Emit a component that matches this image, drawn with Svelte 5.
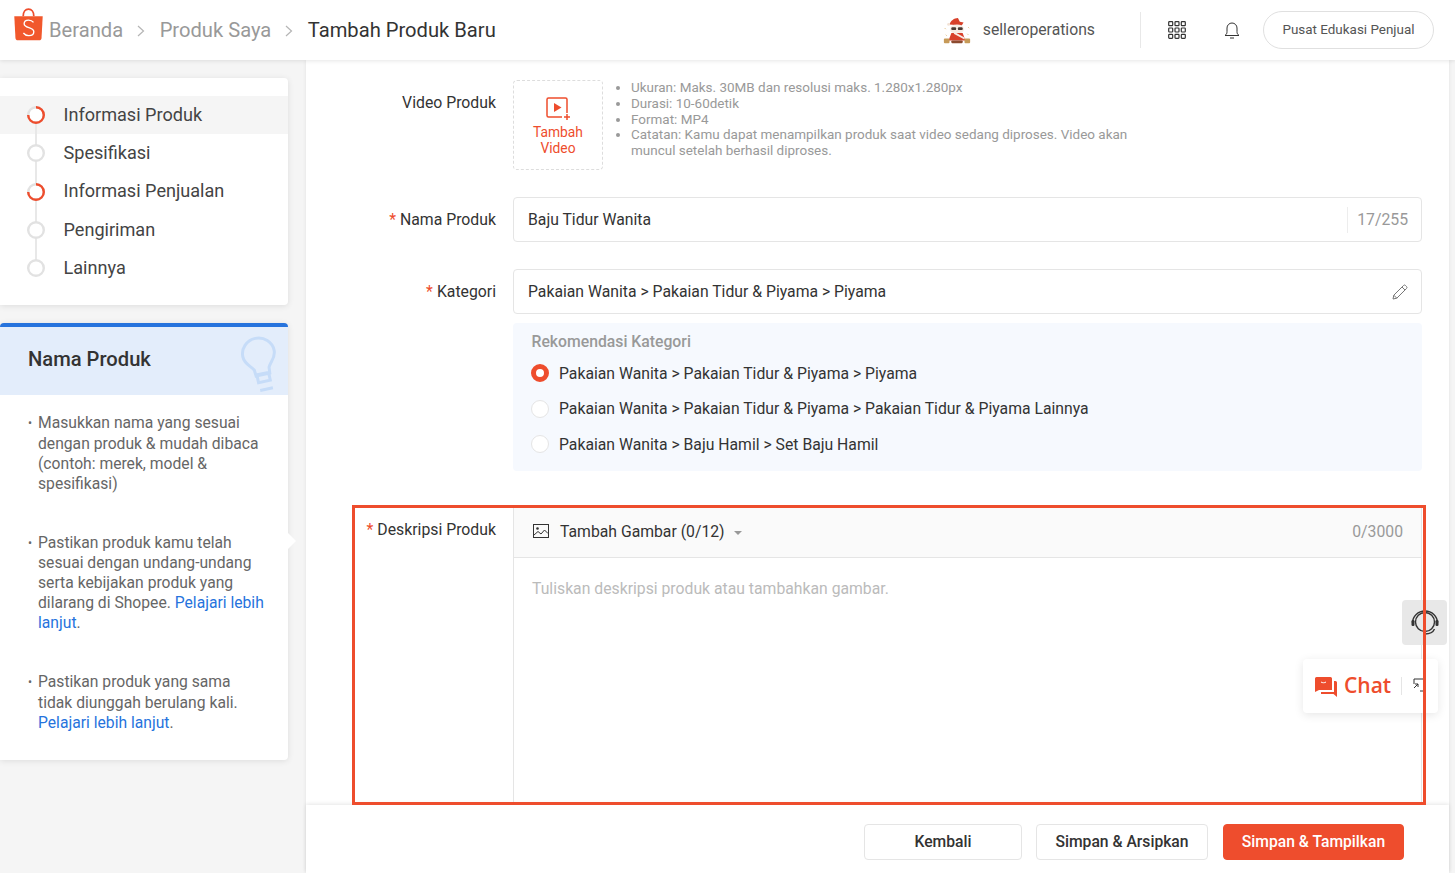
<script>
  const crumbs = ["Beranda", "Produk Saya"];
  const steps = [
    { label: "Informasi Produk", state: "partial", active: true },
    { label: "Spesifikasi", state: "empty" },
    { label: "Informasi Penjualan", state: "partial" },
    { label: "Pengiriman", state: "empty" },
    { label: "Lainnya", state: "empty" }
  ];
  const videoNotes = [
    "Ukuran: Maks. 30MB dan resolusi maks. 1.280x1.280px",
    "Durasi: 10-60detik",
    "Format: MP4",
    "Catatan: Kamu dapat menampilkan produk saat video sedang diproses. Video akan muncul setelah berhasil diproses."
  ];
  const categories = [
    "Pakaian Wanita > Pakaian Tidur & Piyama > Piyama",
    "Pakaian Wanita > Pakaian Tidur & Piyama > Pakaian Tidur & Piyama Lainnya",
    "Pakaian Wanita > Baju Hamil > Set Baju Hamil"
  ];
  let selected = $state(0);
</script>

<div class="page">
  <header class="topbar">
    <svg class="logo" viewBox="0 0 30 34" width="29" height="33">
      <path d="M9.500 8.500C9.500 4 11.800 1.200 15 1.200s5.500 2.800 5.500 7.300" fill="none" stroke="#ee4d2d" stroke-width="1.800"/>
      <path d="M.3 8.500h29.400l-1.200 22.400c-.1 1.500-1.100 2.500-2.500 2.500H4c-1.400 0-2.400-1-2.500-2.500z" fill="#f1582c"/>
      <path d="M20.200 14.800c-1.100-1.400-3-2.400-5.100-2.400-2.600 0-4.600 1.500-4.600 3.700 0 5.100 10 3 10 8.400 0 2.500-2.300 4-5.200 4-2.300 0-4.300-1-5.600-2.700" fill="none" stroke="#fff" stroke-width="1.400"/>
    </svg>
    <nav class="crumbs">
      {#each crumbs as crumb}
        <span class="crumb">{crumb}</span>
        <svg class="chev" viewBox="0 0 8 12" width="8" height="12"><path d="M1 1l5.500 5L1 11" fill="none" stroke="#b5b5b5" stroke-width="1.200"/></svg>
      {/each}
      <span class="crumb current">Tambah Produk Baru</span>
    </nav>
    <div class="account">
      <svg class="avatar" viewBox="0 0 32 32" width="30" height="30">
        <path d="M8 9c1-4 5-7 9-7l2 4 4 1-2 3z" fill="#d8402a"/>
        <circle cx="7" cy="9" r="1.500" fill="#f3e3d6"/>
        <ellipse cx="16" cy="14" rx="7.500" ry="5" fill="#f6ece4"/>
        <rect x="10" y="12" width="5" height="3" rx="1" fill="#4a3a34"/>
        <rect x="17" y="12" width="5" height="3" rx="1" fill="#4a3a34"/>
        <path d="M10 18h12l3 8H7z" fill="#d8402a"/>
        <path d="M13 18l11 6" stroke="#f6ece4" stroke-width="2"/>
        <rect x="2" y="24" width="6" height="5" rx="1" fill="#c69a58"/>
        <rect x="24" y="24" width="6" height="5" rx="1" fill="#c69a58"/>
        <rect x="10" y="26" width="12" height="3" rx="1" fill="#8c4a2f"/>
        <path d="M3 13l1 1M28 12l1 1M27 19l1 1M4 20l1 1" stroke="#e0b878" stroke-width="1"/>
      </svg>
      <span class="username">selleroperations</span>
    </div>
    <span class="divider"></span>
    <svg class="apps" viewBox="0 0 18 18" width="18" height="18">
      {#each [.7, 7, 13.300] as y}
        {#each [.7, 7, 13.300] as x}
          <rect {x} {y} width="4" height="4" rx=".7" fill="none" stroke="#333" stroke-width="1.200"/>
        {/each}
      {/each}
    </svg>
    <svg class="bell" viewBox="0 0 16 18" width="16" height="18">
      <path d="M1 14.500c1.500-1.200 2-2 2-4V7a5 5 0 0 1 10 0v3.500c0 2 .5 2.800 2 4z" fill="none" stroke="#333" stroke-width="1"/>
      <path d="M6 17h4" stroke="#333" stroke-width="1"/>
    </svg>
    <button class="edu">Pusat Edukasi Penjual</button>
  </header>

  <div class="body">
    <aside class="side">
      <section class="card steps">
        {#each steps as step}
          <div class="step" class:active={step.active}>
            {#if step.state === "partial"}
              <svg class="dot" viewBox="0 0 20 20" width="20" height="20">
                <circle cx="10" cy="10" r="7.800" fill="#fff" stroke="#e2e2e2" stroke-width="2.400"/>
                <path d="M10 2.200a7.800 7.800 0 1 1-7.800 7.800" fill="none" stroke="#ee4d2d" stroke-width="2.400"/>
              </svg>
            {:else}
              <svg class="dot" viewBox="0 0 20 20" width="20" height="20">
                <circle cx="10" cy="10" r="7.800" fill="#fff" stroke="#e2e2e2" stroke-width="2.400"/>
              </svg>
            {/if}
            <span>{step.label}</span>
          </div>
        {/each}
      </section>

      <section class="card tips">
        <div class="tips-head">
          <h2>Nama Produk</h2>
          <svg class="bulb" viewBox="0 0 38 60" width="38" height="60">
            <g transform="rotate(-12 19 20)">
              <path d="M12 39l-.5-6C9 28 3 25 3 17.500a16 15.500 0 0 1 32 0c0 7.500-6 10.500-8.500 15.500l-.5 6zM12 38h14M13 39v7h12v-7M13 54h13" fill="none" stroke="#c6dcf8" stroke-width="3"/>
            </g>
          </svg>
        </div>
        <div class="tips-body">
          <p>Masukkan nama yang sesuai dengan produk &amp; mudah dibaca (contoh: merek, model &amp; spesifikasi)</p>
          <p>Pastikan produk kamu telah sesuai dengan undang-undang serta kebijakan produk yang dilarang di Shopee. <a href="#top">Pelajari lebih lanjut</a>.</p>
          <p>Pastikan produk yang sama tidak diunggah berulang kali. <a href="#top">Pelajari lebih lanjut</a>.</p>
        </div>
      </section>
    </aside>

    <main class="main">
      <div class="form">
        <div class="row video-row">
          <div class="label plain">Video Produk</div>
          <div class="video-field">
            <div class="video-box">
              <svg viewBox="0 0 26 26" width="26" height="26">
                <path d="M17 21H3.500A1.500 1.500 0 0 1 2 19.500v-16A1.500 1.500 0 0 1 3.500 2h17A1.500 1.500 0 0 1 22 3.500V17" fill="none" stroke="#ee4d2d" stroke-width="1.500"/>
                <path d="M9 7l7.500 4.500L9 16z" fill="#ee4d2d"/>
                <path d="M22 18v6M19 21h6" stroke="#ee4d2d" stroke-width="1.500"/>
              </svg>
              <span>Tambah Video</span>
            </div>
            <ul class="notes">
              {#each videoNotes as note}
                <li>{note}</li>
              {/each}
            </ul>
          </div>
        </div>

        <div class="row name-row">
          <div class="label"><i>*</i>Nama Produk</div>
          <div class="input">
            <span class="value">Baju Tidur Wanita</span>
            <span class="count">17/255</span>
          </div>
        </div>

        <div class="row cat-row">
          <div class="label"><i>*</i>Kategori</div>
          <div class="cat-field">
            <div class="input">
              <span class="value">Pakaian Wanita &gt; Pakaian Tidur &amp; Piyama &gt; Piyama</span>
              <svg class="pencil" viewBox="0 0 16 16" width="16" height="16">
                <path d="M1 15l.8-3.800L11.500 1.500a1.400 1.400 0 0 1 2 0l1 1a1.400 1.400 0 0 1 0 2L4.800 14.200zM1.800 11.200l3 3M10 3l3 3" fill="none" stroke="#777" stroke-width="1"/>
              </svg>
            </div>
            <div class="recs">
              <div class="recs-title">Rekomendasi Kategori</div>
              {#each categories as cat, i}
                <label class="radio">
                  <input type="radio" name="cat" value={i} bind:group={selected} />
                  <span class="mark"></span>
                  <span>{cat}</span>
                </label>
              {/each}
            </div>
          </div>
        </div>

        <div class="row desc-row">
          <div class="label"><i>*</i>Deskripsi Produk</div>
          <div class="editor">
            <div class="toolbar">
              <svg viewBox="0 0 16 14" width="16" height="14">
                <rect x=".5" y=".5" width="15" height="13" fill="none" stroke="#333" stroke-width="1"/>
                <circle cx="4.500" cy="4.500" r="1.300" fill="#333"/>
                <path d="M1 11l4-3.500 3 2.500 3.500-4L15 9.500" fill="none" stroke="#333" stroke-width="1"/>
              </svg>
              <span class="add-img">Tambah Gambar (0/12)</span>
              <span class="caret"></span>
              <span class="desc-count">0/3000</span>
            </div>
            <div class="placeholder">Tuliskan deskripsi produk atau tambahkan gambar.</div>
          </div>
        </div>
      </div>

      <footer class="actions">
        <button class="btn back">Kembali</button>
        <button class="btn archive">Simpan &amp; Arsipkan</button>
        <button class="btn primary">Simpan &amp; Tampilkan</button>
      </footer>
    </main>
  </div>

  <div class="highlight"></div>

  <div class="support">
    <svg viewBox="0 0 30 30" width="30" height="30">
      <circle cx="15" cy="14" r="9.500" fill="none" stroke="#333" stroke-width="1.400"/>
      <path d="M2.500 15a12.500 12 0 0 1 25 0M15 26c5 0 8-1.500 9.500-5" fill="none" stroke="#333" stroke-width="1.400"/>
      <rect x="1.500" y="12" width="3" height="6" rx="1.200" fill="#333"/>
      <rect x="25.500" y="12" width="3" height="6" rx="1.200" fill="#333"/>
    </svg>
  </div>
  <div class="chat">
    <svg viewBox="0 0 22 20" width="22" height="20">
      <path d="M0 1.500A1.500 1.500 0 0 1 1.500 0h14A1.500 1.500 0 0 1 17 1.500V13H4l-4 2z" fill="#ee4d2d"/>
      <path d="M19 4h1.500A1.500 1.500 0 0 1 22 5.500V20l-3.500-3H6v-2h13z" fill="#ee4d2d"/>
      <path d="M6 5c1.500 1 3.500 1 5 0" fill="none" stroke="#fff" stroke-width="1"/>
    </svg>
    <span class="chat-text">Chat</span>
    <span class="chat-sep"></span>
    <svg class="chat-expand" viewBox="0 0 12 14" width="12" height="14">
      <path d="M1 6V1h10v12H7" fill="none" stroke="#333" stroke-width="1"/>
      <path d="M5 6L1 10M2 6h3v3" fill="none" stroke="#333" stroke-width="1"/>
    </svg>
  </div>
</div>

<style>
  :global(body) {
    margin: 0;
    background: #f5f5f5;
    font-family: Roboto, "Liberation Sans", sans-serif;
    color: #333;
    overflow: hidden;
  }

  .page {
    position: relative;
    height: 873px;
    overflow: hidden;
    display: flex;
    flex-direction: column;
  }

  .topbar {
    position: relative;
    z-index: 3;
    flex: none;
    height: 60px;
    box-sizing: border-box;
    padding: 0 21px 1px 14px;
    display: flex;
    align-items: center;
    background: #fff;
    box-shadow: 0 1px 4px rgba(0, 0, 0, .1);
  }
  .logo { margin: -10px 6px 0 0; }
  .crumbs { display: flex; align-items: center; margin-top: 1px; font-size: 20.160px; }
  .crumb { color: #999; }
  .crumb.current { color: #333; }
  .chev { margin: 1px 14.500px 0 14px; }
  .account { margin-left: auto; display: flex; align-items: center; gap: 11px; }
  .avatar { margin-top: 2px; }
  .username { font-size: 15.760px; color: #555; }
  .divider { width: 1px; height: 36px; background: #e8e8e8; margin: 0 27px 0 45px; }
  .apps { margin-right: 38px; }
  .bell { margin-right: 23px; }
  .edu {
    width: 171px;
    height: 38px;
    padding: 0;
    background: #fff;
    border: 1px solid #e0e0e0;
    border-radius: 19px;
    font: 13.440px Roboto, sans-serif;
    color: #555;
  }

  .body { flex: 1; min-height: 0; display: flex; }
  .side { flex: none; width: 288px; margin-right: 18px; padding-top: 18px; }
  .card {
    background: #fff;
    border-radius: 0 4px 4px 0;
    box-shadow: 0 1px 6px rgba(0, 0, 0, .1);
  }
  .steps { height: 227px; box-sizing: border-box; padding-top: 18px; }
  .step {
    position: relative;
    height: 38.250px;
    padding-left: 26px;
    display: flex;
    align-items: center;
    gap: 17.500px;
    font-size: 18.100px;
    color: #444;
  }
  .step span { margin-bottom: 1.500px; }
  .step.active { background: #f5f5f5; }
  .dot { position: relative; z-index: 1; }
  .step:not(:last-child)::before {
    content: "";
    position: absolute;
    left: 35px;
    top: 19px;
    width: 2px;
    height: 38px;
    background: #e8e8e8;
  }
  .tips { position: relative; margin-top: 18px; height: 433px; border-top: 4px solid #2673dd; border-radius: 4px 4px 4px 0; }
  .tips::after {
    content: "";
    position: absolute;
    right: -8px;
    top: 206px;
    width: 0;
    height: 0;
    border: 8px solid transparent;
    border-right-width: 0;
    border-left-color: #fff;
  }
  .tips-head {
    position: relative;
    overflow: hidden;
    height: 68px;
    padding-left: 28px;
    display: flex;
    align-items: center;
    background: #e3edfb;
  }
  h2 { margin: 0 0 4px; font-size: 20.160px; font-weight: 500; color: #333; }
  .bulb { position: absolute; right: 10px; top: 9px; }
  .tips-body { padding: 18.400px 22px 0 28px; font-size: 15.680px; line-height: 20.160px; color: #666; }
  .tips-body p { position: relative; margin: 0 0 38.800px; padding-left: 10px; }
  .tips-body p::before { content: "•"; position: absolute; left: 0; font-size: 12px; }
  .tips-body a { color: #2673dd; text-decoration: none; }

  .main {
    position: relative;
    flex: none;
    width: 1143px;
    background: #fff;
    box-shadow: 0 0 4px rgba(0, 0, 0, .08);
    display: flex;
    flex-direction: column;
    min-height: 0;
  }
  .form { flex: 1; min-height: 0; overflow: hidden; padding-top: 20px; }
  .row { display: flex; }
  .label {
    flex: none;
    width: 190px;
    text-align: right;
    font-size: 15.800px;
    line-height: 46px;
    color: #333;
  }
  .label i { font-style: normal; color: #ee4d2d; margin-right: 4px; }
  .video-field { display: flex; width: 720px; margin-left: 17px; }
  .video-box {
    flex: none;
    width: 90px;
    height: 90px;
    box-sizing: border-box;
    padding-top: 15px;
    border: 1px dashed #ddd;
    border-radius: 4px;
    display: flex;
    flex-direction: column;
    align-items: center;
    text-align: center;
    font-size: 13.800px;
    line-height: 16px;
    color: #ee4d2d;
  }
  .video-box svg { margin-bottom: 2px; }
  .video-box span { width: 60px; }
  .notes {
    margin: 0;
    padding: 0 0 0 28px;
    width: 510px;
    font-size: 13.470px;
    line-height: 15.750px;
    color: #999;
  }
  .name-row { margin-top: 27px; }
  .cat-row { margin-top: 26px; }
  .input {
    flex: 1;
    height: 45px;
    box-sizing: border-box;
    padding: 0 13px 0 14px;
    display: flex;
    align-items: center;
    border: 1px solid #e5e5e5;
    border-radius: 4px;
    font-size: 15.760px;
    color: #333;
  }
  .name-row .input { margin: 0 27px 0 17px; }
  .value { flex: 1; }
  .count { padding-left: 9px; line-height: 26px; border-left: 1px solid #ededed; color: #999; }
  .cat-field { flex: 1; margin: 0 27px 0 17px; }
  .recs {
    margin-top: 9px;
    height: 148px;
    box-sizing: border-box;
    padding: 9px 18px 0;
    background: #f6f9fe;
    border-radius: 4px;
    font-size: 15.760px;
  }
  .recs-title { margin: 0 0 3.500px .5px; font-weight: 500; color: #999; line-height: 20px; }
  .radio { display: flex; align-items: center; height: 35.500px; gap: 10px; color: #333; }
  .radio input { position: absolute; opacity: 0; }
  .mark {
    width: 18px;
    height: 18px;
    box-sizing: border-box;
    border: 1px solid #e5e5e5;
    border-radius: 50%;
    background: #fff;
  }
  .radio input:checked + .mark { border: 5px solid #ee4d2d; }
  .desc-row { margin-top: 34px; flex: 1; height: 300px; }
  .desc-row .label { line-height: 50px; }
  .editor {
    flex: 1;
    margin: 0 27px 0 17px;
    border-left: 1px solid #e5e5e5;
    border-right: 1px solid #e5e5e5;
    height: 300px;
  }
  .toolbar {
    height: 53px;
    box-sizing: border-box;
    padding: 0 18px 0 19px;
    display: flex;
    align-items: center;
    background: #fafafa;
    border-bottom: 1px solid #e5e5e5;
    font-size: 15.760px;
  }
  .add-img { margin-left: 11px; }
  .caret {
    margin: 3px 0 0 9px;
    border: 4px solid transparent;
    border-top: 4px solid #999;
    border-bottom: 0;
  }
  .desc-count { margin-left: auto; color: #999; }
  .placeholder { padding: 21px 18px; font-size: 15.760px; line-height: 20px; color: #bbb; }

  .actions {
    position: relative;
    flex: none;
    height: 68px;
    box-sizing: border-box;
    padding: 6px 45px 0 0;
    display: flex;
    align-items: center;
    justify-content: flex-end;
    gap: 14px;
    background: #fff;
    box-shadow: 0 -1px 4px rgba(0, 0, 0, .1);
  }
  .btn {
    height: 36px;
    padding: 0 0 1px;
    border: 1px solid #e5e5e5;
    border-radius: 4px;
    background: #fff;
    font: 500 15.680px Roboto, sans-serif;
    color: #333;
  }
  .back { width: 158px; }
  .archive { width: 172px; margin-right: 1px; }
  .primary { width: 181px; background: #ee4d2d; border-color: #ee4d2d; color: #fff; }

  .highlight {
    position: absolute;
    left: 352px;
    top: 505px;
    width: 1074px;
    height: 300px;
    box-sizing: border-box;
    border: 3px solid #ee4d2d;
    pointer-events: none;
    z-index: 6;
  }

  .support {
    position: absolute;
    z-index: 5;
    left: 1402px;
    top: 600px;
    width: 45px;
    height: 45px;
    display: flex;
    align-items: center;
    justify-content: center;
    background: #e8e8e8;
    border-radius: 4px;
  }
  .chat {
    position: absolute;
    z-index: 5;
    left: 1303px;
    top: 659px;
    width: 135px;
    height: 54px;
    box-sizing: border-box;
    padding-left: 12px;
    display: flex;
    align-items: center;
    background: #fff;
    border-radius: 4px;
    box-shadow: 0 2px 10px rgba(0, 0, 0, .1);
  }
  .chat svg:first-child { margin-top: 2px; }
  .chat-text { margin: -2px 0 0 7px; font: 600 21px "Open Sans", sans-serif; color: #ee4d2d; }
  .chat-sep { width: 1px; height: 18px; margin: 0 11px 0 10px; background: #e5e5e5; }
  .chat-expand { margin-top: -2px; }
</style>
